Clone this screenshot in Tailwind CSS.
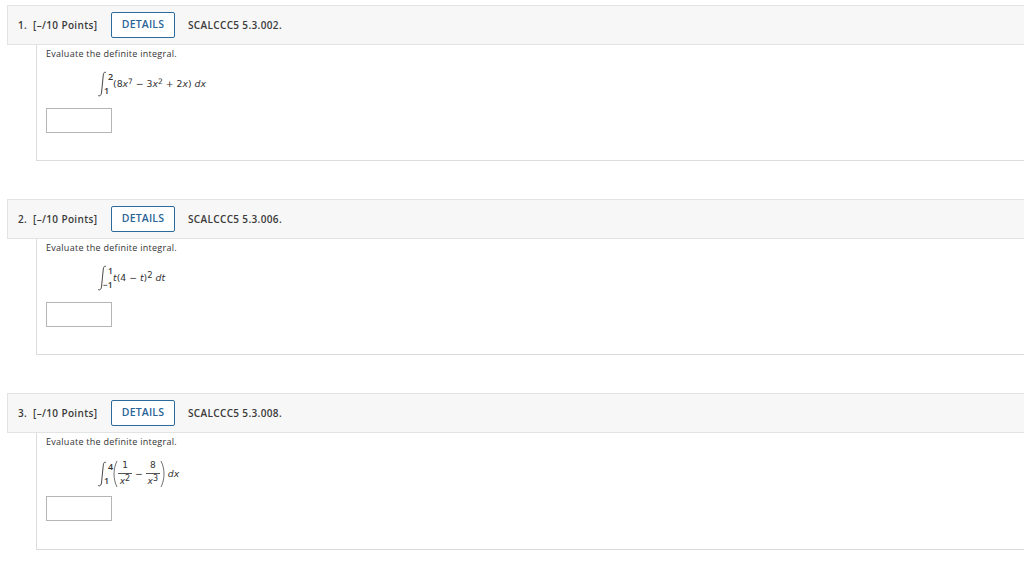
<!DOCTYPE html>
<html><head><meta charset="utf-8"><script src="https://cdn.jsdelivr.net/npm/@tailwindcss/browser@4"></script></head>
<body class="bg-white overflow-hidden font-['Open_Sans',sans-serif]">
<main class="pt-[5px] pl-[7px] flex flex-col gap-[35px] w-[1024px]">

<section class="h-[159px]">
  <header class="h-[40px] bg-[#f7f7f7] border border-r-0 border-[#e3e3e3] flex items-center pl-[10px] text-[10px] font-semibold text-[#3a3a3a] tracking-[0.35px]">
    <span class="w-[93px] whitespace-pre">1.  [–/10 Points]</span>
    <button class="w-[64px] h-[26px] rounded-[2px] border border-[#2a6a9c] bg-white text-[#2a6496] text-[10.5px] font-semibold tracking-[0.2px]">DETAILS</button>
    <span class="ml-[13px]">SCALCCC5 5.3.002.</span>
  </header>
  <div class="ml-[29px] h-[116px] border-l border-b border-[#dcdcdc] pl-[9px] pt-[2px]">
    <p class="text-[9px] leading-[13px] text-[#333] tracking-[0.27px]">Evaluate the definite integral.</p>
    <div class="ml-[51px] mt-[12px] h-[24px] flex items-center font-['DejaVu_Sans',sans-serif] text-[9.3px] text-[#333]">
      <svg class="w-[10px] h-[26px]" viewBox="0 0 10 26" fill="none" stroke="#333" stroke-width="0.9"><path d="M9 1.5C7.2 0.6 6.5 2 6.2 5L4.6 21C4.3 24 3.4 25.4 1.2 24.6"/></svg>
      <div class="w-[6px] h-[24px] flex flex-col justify-between text-[9px] leading-[10px] font-['Open_Sans',sans-serif] font-semibold"><span class="pl-[1px]">2</span><span class="-ml-[3px]">1</span></div>
      <span class="whitespace-pre">(8<i>x</i><sup class="text-[7.5px] -top-[3px]">7</sup> − 3<i>x</i><sup class="text-[7.5px] -top-[3px]">2</sup> + 2<i>x</i>) <i>dx</i></span>
    </div>
    <div class="mt-[12px] w-[66px] h-[25px] border border-[#b5b5b5] bg-white"></div>
  </div>
</section>

<section class="h-[159px]">
  <header class="h-[40px] bg-[#f7f7f7] border border-r-0 border-[#e3e3e3] flex items-center pl-[10px] text-[10px] font-semibold text-[#3a3a3a] tracking-[0.35px]">
    <span class="w-[93px] whitespace-pre">2.  [–/10 Points]</span>
    <button class="w-[64px] h-[26px] rounded-[2px] border border-[#2a6a9c] bg-white text-[#2a6496] text-[10.5px] font-semibold tracking-[0.2px]">DETAILS</button>
    <span class="ml-[13px]">SCALCCC5 5.3.006.</span>
  </header>
  <div class="ml-[29px] h-[116px] border-l border-b border-[#dcdcdc] pl-[9px] pt-[2px]">
    <p class="text-[9px] leading-[13px] text-[#333] tracking-[0.27px]">Evaluate the definite integral.</p>
    <div class="ml-[51px] mt-[12px] h-[24px] flex items-center font-['DejaVu_Sans',sans-serif] text-[9.3px] text-[#333]">
      <svg class="w-[10px] h-[26px]" viewBox="0 0 10 26" fill="none" stroke="#333" stroke-width="0.9"><path d="M9 1.5C7.2 0.6 6.5 2 6.2 5L4.6 21C4.3 24 3.4 25.4 1.2 24.6"/></svg>
      <div class="w-[6px] h-[24px] flex flex-col justify-between text-[8.5px] leading-[10px] font-['Open_Sans',sans-serif] font-semibold"><span class="pl-[1px]">1</span><span class="-ml-[4px] whitespace-pre">−1</span></div>
      <span class="whitespace-pre"><i>t</i>(4 − <i>t</i>)<sup class="text-[8.5px] -top-[3px]">2</sup> <i>dt</i></span>
    </div>
    <div class="mt-[12px] w-[66px] h-[25px] border border-[#b5b5b5] bg-white"></div>
  </div>
</section>

<section class="h-[160px]">
  <header class="h-[40px] bg-[#f7f7f7] border border-r-0 border-[#e3e3e3] flex items-center pl-[10px] text-[10px] font-semibold text-[#3a3a3a] tracking-[0.35px]">
    <span class="w-[93px] whitespace-pre">3.  [–/10 Points]</span>
    <button class="w-[64px] h-[26px] rounded-[2px] border border-[#2a6a9c] bg-white text-[#2a6496] text-[10.5px] font-semibold tracking-[0.2px]">DETAILS</button>
    <span class="ml-[13px]">SCALCCC5 5.3.008.</span>
  </header>
  <div class="ml-[29px] h-[117px] border-l border-b border-[#dcdcdc] pl-[9px] pt-[2px]">
    <p class="text-[9px] leading-[13px] text-[#333] tracking-[0.27px]">Evaluate the definite integral.</p>
    <div class="ml-[51px] mt-[10px] h-[31px] flex items-center font-['DejaVu_Sans',sans-serif] text-[9.3px] text-[#333]">
      <svg class="w-[10px] h-[26px]" viewBox="0 0 10 26" fill="none" stroke="#333" stroke-width="0.9"><path d="M9 1.5C7.2 0.6 6.5 2 6.2 5L4.6 21C4.3 24 3.4 25.4 1.2 24.6"/></svg>
      <div class="w-[5px] h-[24px] flex flex-col justify-between text-[9px] leading-[10px] font-['Open_Sans',sans-serif] font-semibold"><span class="pl-[1px]">4</span><span class="-ml-[3px]">1</span></div>
      <svg class="w-[6px] h-[28px]" viewBox="0 0 6 28" fill="none" stroke="#333" stroke-width="0.7"><path d="M5 1C1 9 1 19 5 27"/></svg>
      <div class="w-[14px] flex flex-col items-center text-[9px] leading-[11px]"><span class="border-b border-[#555] w-full text-center pb-[2px]">1</span><span class="whitespace-pre pt-[2px]"><i>x</i><sup class="text-[8px] -top-[3px]">2</sup></span></div>
      <span class="mx-[3px]">−</span>
      <div class="w-[14px] flex flex-col items-center text-[9px] leading-[11px]"><span class="border-b border-[#555] w-full text-center pb-[2px]">8</span><span class="whitespace-pre pt-[2px]"><i>x</i><sup class="text-[8px] -top-[3px]">3</sup></span></div>
      <svg class="w-[6px] h-[28px]" viewBox="0 0 6 28" fill="none" stroke="#333" stroke-width="0.7"><path d="M1 1C5 9 5 19 1 27"/></svg>
      <span class="ml-[2px]"><i>dx</i></span>
    </div>
    <div class="mt-[7px] w-[66px] h-[25px] border border-[#b5b5b5] bg-white"></div>
  </div>
</section>

</main>
</body></html>
